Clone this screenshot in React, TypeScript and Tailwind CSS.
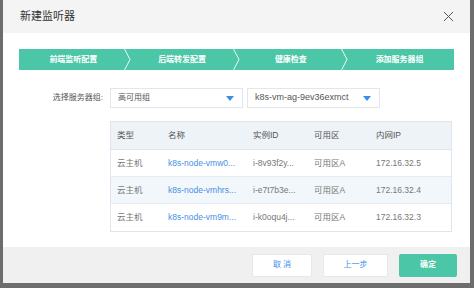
import { X } from 'lucide-react';

const font = { fontFamily: '"Liberation Sans", "Noto Sans CJK SC", sans-serif' };

const steps = ['前端监听配置', '后端转发配置', '健康检查', '添加服务器组'];

const rows = [
  { name: 'k8s-node-vmw0...', id: 'i-8v93f2y...', ip: '172.16.32.5' },
  { name: 'k8s-node-vmhrs...', id: 'i-e7t7b3e...', ip: '172.16.32.4' },
  { name: 'k8s-node-vm9m...', id: 'i-k0oqu4j...', ip: '172.16.32.3' },
];

function Caret() {
  return (
    <svg width="8" height="5" viewBox="0 0 8 5" className="shrink-0">
      <path d="M0 0 H8 L4 5 Z" fill="#3a8ee6" />
    </svg>
  );
}

function Select({ value, size }: { value: string; size: string }) {
  return (
    <div className="w-[133px] h-[20px] border border-[#e3e6ea] bg-white flex items-center justify-between pl-[7px] pr-[8px]">
      <span className={`${size} text-[#555] truncate`}>{value}</span>
      <Caret />
    </div>
  );
}

export default function App() {
  return (
    <div className="w-[474px] h-[288px] bg-[#6d6d6d] pl-[3px] pr-[4px] pb-[5px] overflow-hidden" style={font}>
      <div className="w-full h-full bg-white flex flex-col">
        {/* Header */}
        <div className="h-[33px] bg-[#f4f4f4] flex items-center justify-between pl-[17px] pr-[13px] shrink-0">
          <span className="text-[11px] text-[#333]">新建监听器</span>
          <X size={17} strokeWidth={1.4} className="text-[#555]" />
        </div>

        {/* Body */}
        <div className="flex-1 px-[16px] pt-[16px]">
          <div className="flex h-[21px] bg-[#4bc6a6]">
            {steps.map((s, i) => (
              <div key={s} className="relative flex-1 flex items-center justify-center">
                <span className="text-[8px] font-bold text-white">{s}</span>
                {i < steps.length - 1 && (
                  <svg width="7" height="21" viewBox="0 0 7 21" className="absolute right-[-3px] top-0">
                    <path d="M0.5 0 L6 10.5 L0.5 21" fill="none" stroke="#ffffff" strokeWidth="0.9" />
                  </svg>
                )}
              </div>
            ))}
          </div>

          <div className="flex items-center mt-[18px]">
            <div className="w-[84px] text-right text-[8px] text-[#555]">选择服务器组:</div>
            <div className="ml-[7px] flex gap-[4px]">
              <Select value="高可用组" size="text-[8px]" />
              <Select value="k8s-vm-ag-9ev36exmct" size="text-[9px]" />
            </div>
          </div>

          <div className="ml-[91px] mt-[13px] w-[342px] border border-[#dfe5ec] text-[8.5px]">
            <div className="flex h-[28px] items-center bg-[#eef3f8] text-[#555] border-b border-[#dfe5ec]">
              <div className="w-[57px] pl-[6px]">类型</div>
              <div className="w-[85px]">名称</div>
              <div className="w-[61px]">实例ID</div>
              <div className="w-[62px]">可用区</div>
              <div className="flex-1">内网IP</div>
            </div>
            {rows.map((r, i) => (
              <div
                key={r.ip}
                className={`flex h-[27px] items-center text-[#777] ${i === 1 ? 'bg-[#f2f7fc]' : 'bg-white'} ${i < rows.length - 1 ? 'border-b border-[#e6ebf0]' : ''}`}
              >
                <div className="w-[57px] pl-[6px]">云主机</div>
                <div className="w-[85px] text-[#4a90e2] whitespace-nowrap overflow-hidden">{r.name}</div>
                <div className="w-[61px] whitespace-nowrap overflow-hidden">{r.id}</div>
                <div className="w-[62px]">可用区A</div>
                <div className="flex-1">{r.ip}</div>
              </div>
            ))}
          </div>
        </div>

        {/* Footer */}
        <div className="h-[36px] bg-[#f0f0f0] flex items-center justify-end gap-[11px] pr-[13px] shrink-0">
          <button className="w-[60px] h-[23px] bg-white border border-[#e8e8e8] rounded-[2px] text-[8px] text-[#3a8ee6]">取 消</button>
          <button className="w-[65px] h-[23px] bg-white border border-[#e8e8e8] rounded-[2px] text-[8px] text-[#3a8ee6]">上一步</button>
          <button className="w-[58px] h-[23px] bg-[#4bc6a6] rounded-[2px] text-[8px] font-bold text-white">确定</button>
        </div>
      </div>
    </div>
  );
}
